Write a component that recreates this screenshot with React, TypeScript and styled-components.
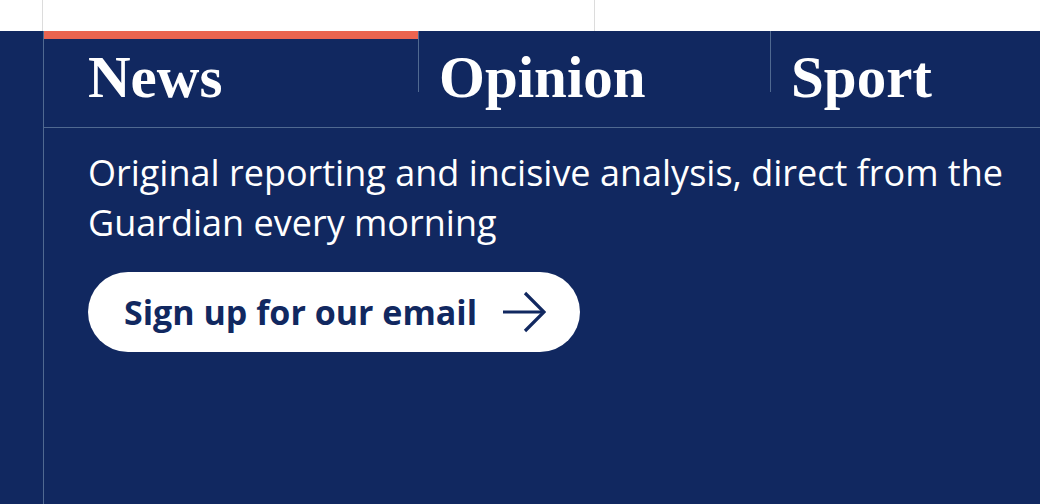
import React from "react";
import styled, { createGlobalStyle } from "styled-components";

const GlobalStyle = createGlobalStyle`
  html, body {
    margin: 0;
    padding: 0;
    background: #ffffff;
  }
`;

const NAVY = "#112860";
const LINE = "#506991";

const Page = styled.div`
  width: 1040px;
  height: 504px;
  overflow: hidden;
  display: flex;
  flex-direction: column;
`;

const TopStrip = styled.div`
  height: 31px;
  display: flex;
  padding-left: 42px;
  background: #ffffff;
`;

const TopCell = styled.div<{ $w?: number }>`
  width: ${(p) => (p.$w ? `${p.$w}px` : "auto")};
  flex: ${(p) => (p.$w ? "none" : "1")};
  border-left: 1px solid #dcdcdc;
`;

const Panel = styled.section`
  flex: 1;
  display: flex;
  background: ${NAVY};
`;

const Gutter = styled.div`
  width: 43px;
  flex: none;
`;

const Main = styled.div`
  flex: 1;
  border-left: 1px solid ${LINE};
  display: flex;
  flex-direction: column;
`;

const Tabs = styled.nav`
  height: 96px;
  display: flex;
  border-bottom: 1px solid ${LINE};
`;

const Tab = styled.div<{ $active?: boolean; $first?: boolean }>`
  position: relative;
  width: ${(p) => (p.$first ? "374px" : "352px")};
  flex: none;
  box-sizing: border-box;
  padding: 17px 0 0 ${(p) => (p.$first ? "44px" : "21px")};
  font-family: "Liberation Serif", "Times New Roman", serif;
  font-weight: 700;
  font-size: 59px;
  line-height: 1;
  color: #ffffff;

  &::before {
    content: "";
    position: absolute;
    left: 0;
    top: 0;
    width: 1px;
    height: 61px;
    background: ${(p) => (p.$first ? "transparent" : LINE)};
  }

  &::after {
    content: "";
    position: absolute;
    left: 0;
    right: 0;
    top: 0;
    height: 8px;
    background: ${(p) => (p.$active ? "#eb6450" : "transparent")};
  }
`;

const Content = styled.div`
  padding: 20px 0 0 44px;
  display: flex;
  flex-direction: column;
  align-items: flex-start;
`;

const Blurb = styled.p`
  margin: 0;
  font-family: "Open Sans", "Liberation Sans", sans-serif;
  font-size: 36px;
  line-height: 50px;
  color: #ffffff;
  width: 940px;
`;

const SignUp = styled.a`
  margin-top: 24px;
  height: 80px;
  box-sizing: border-box;
  padding: 0 34px 0 36px;
  display: inline-flex;
  align-items: center;
  gap: 25px;
  background: #ffffff;
  border-radius: 40px;
  color: ${NAVY};
  font-family: "Open Sans", "Liberation Sans", sans-serif;
  font-weight: 700;
  font-size: 34px;
  text-decoration: none;
  cursor: pointer;
`;

const Arrow = () => (
  <svg width="44" height="42" viewBox="0 0 44 42" fill="none">
    <path d="M1 21H41" stroke={NAVY} strokeWidth="3.2" />
    <path d="M23 2L42 21L23 40" stroke={NAVY} strokeWidth="3.2" />
  </svg>
);

export default function App() {
  return (
    <>
      <GlobalStyle />
      <Page>
        <TopStrip>
          <TopCell $w={551} />
          <TopCell />
        </TopStrip>
        <Panel>
          <Gutter />
          <Main>
            <Tabs>
              <Tab $first $active>News</Tab>
              <Tab>Opinion</Tab>
              <Tab>Sport</Tab>
            </Tabs>
            <Content>
              <Blurb>
                Original reporting and incisive analysis, direct from the
                Guardian every morning
              </Blurb>
              <SignUp>
                Sign up for our email
                <Arrow />
              </SignUp>
            </Content>
          </Main>
        </Panel>
      </Page>
    </>
  );
}
